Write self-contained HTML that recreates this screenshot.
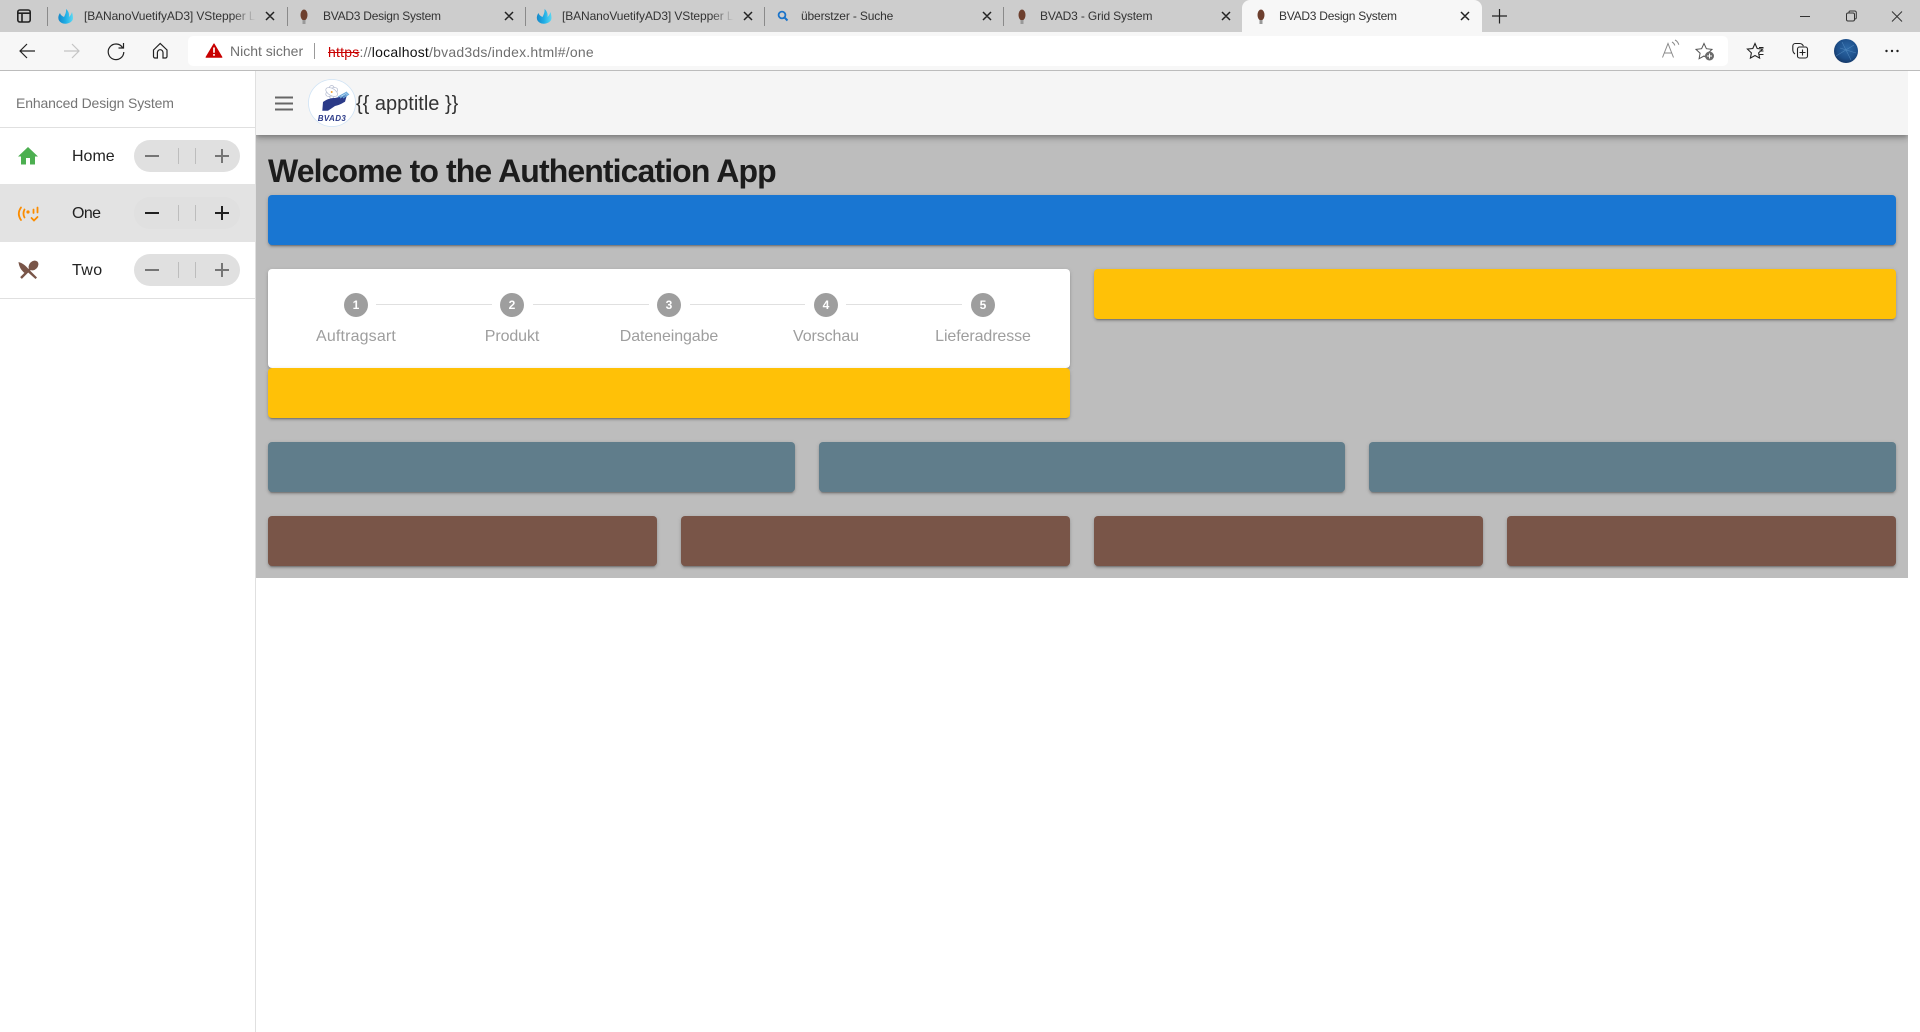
<!DOCTYPE html>
<html><head><meta charset="utf-8"><title>BVAD3 Design System</title>
<style>
html,body{margin:0;padding:0;width:1920px;height:1032px;overflow:hidden;background:#fff;font-family:"Liberation Sans",sans-serif}
div,span{position:absolute;box-sizing:border-box;white-space:nowrap}
svg{position:absolute;overflow:visible}
.tt{top:8px;height:16px;line-height:16px;font-size:12px;color:#333;letter-spacing:-.25px}
.fade{overflow:hidden;letter-spacing:-.1px;-webkit-mask-image:linear-gradient(90deg,#000 85%,transparent 98%);mask-image:linear-gradient(90deg,#000 85%,transparent 98%)}
.sep{top:7px;width:1px;height:19px;background:#8a8a8a}
.card{border-radius:4px;box-shadow:0 3px 1px -2px rgba(0,0,0,.2),0 2px 2px 0 rgba(0,0,0,.14),0 1px 5px 0 rgba(0,0,0,.12)}
.pill{left:134px;width:106px;height:32px;border-radius:16px;background:#e0e0e0}
.lab{left:72px;font-size:16px;line-height:20px;height:20px;color:#222}
.stl{font-size:16px;color:#9e9e9e;top:327px;height:20px;line-height:20px;width:140px;text-align:center;letter-spacing:-.1px}
.c{width:24px;height:24px;border-radius:50%;background:#9e9e9e;top:293px;color:#fff;font-size:12px;font-weight:bold;line-height:24px;text-align:center}
.ln{top:304px;height:1px;background:#e0e0e0}
</style></head><body>

<!-- tab strip -->
<div style="left:0;top:0;width:1920px;height:32px;background:#cdcdcd"></div>
<div style="left:0;top:32px;width:1920px;height:38px;background:#f7f7f7"></div>
<div style="left:0;top:70px;width:1920px;height:1px;background:#bcbcbc"></div>
<div style="left:1242px;top:0;width:240px;height:33px;background:#f7f7f7;border-radius:8px 8px 0 0"></div>
<div style="left:188px;top:36px;width:1540px;height:30px;background:#fff;border-radius:5px"></div>

<svg style="left:0;top:0" width="1920" height="70" fill="none" stroke="#222" stroke-width="1.2">
 <defs>
  <linearGradient id="fl" x1="0" y1="0" x2="1" y2="0"><stop offset="0" stop-color="#1587c8"/><stop offset=".5" stop-color="#20aee6"/><stop offset="1" stop-color="#5cd8f2"/></linearGradient>
  <radialGradient id="av" cx=".55" cy=".4" r=".7"><stop offset="0" stop-color="#2e6aa8"/><stop offset=".6" stop-color="#1d4f8a"/><stop offset="1" stop-color="#122e58"/></radialGradient>
 </defs>
 <!-- tab action -->
 <rect x="17.800" y="10" width="12.400" height="12" rx="2" stroke-width="1.600"/><path d="M18 13.200h12M22 13.200v8.800" stroke-width="1.600"/>
 <!-- close x -->
 <g stroke="#222" stroke-width="1.5"><path d="M266 12l8 8M274 12l-8 8M505 12l8 8M513 12l-8 8M744 12l8 8M752 12l-8 8M983 12l8 8M991 12l-8 8M1222 12l8 8M1230 12l-8 8M1461 12l8 8M1469 12l-8 8"/></g>
 <!-- new tab -->
 <path d="M1499.500 9v14.500M1492 16h15" stroke-width="1.200"/>
 <!-- window controls -->
 <path d="M1800 16.500h10" stroke="#333" stroke-width="1"/>
 <rect x="1846.500" y="13" width="8" height="8" rx="1.500" stroke="#333" stroke-width="1"/><path d="M1849 13v-.8a1.200 1.200 0 0 1 1.200-1.200h4.600a1.500 1.500 0 0 1 1.500 1.500v5.300a1.200 1.200 0 0 1-1.200 1.200h-.6" stroke="#333" stroke-width="1"/>
 <path d="M1892 11.500l10 10M1902 11.500l-10 10" stroke="#333" stroke-width="1"/>
 <!-- flame favicons -->
 <g stroke="none" fill="url(#fl)">
  <path d="M60 13C57 17 58 22 63 23.500 68 24.500 73 22 73 18 73 16 72.500 14 72 12 71 15 70 16 69 17 69.500 14 68.500 11 66 9 66.500 12 65 15 64 17 62 16 60.500 15 60 13z"/>
  <path d="M538.500 13C535.500 17 536.500 22 541.500 23.500 546.500 24.500 551.500 22 551.500 18 551.500 16 551 14 550.500 12 549.500 15 548.500 16 547.500 17 548 14 547 11 544.500 9 545 12 543.500 15 542.500 17 540.500 16 539 15 538.500 13z"/>
 </g>
 <!-- brown favicons -->
 <g stroke="none" fill="#6d3f2e"><ellipse cx="304" cy="15" rx="3.500" ry="5.500"/><ellipse cx="1022" cy="15" rx="3.500" ry="5.500"/><ellipse cx="1261" cy="15" rx="3.500" ry="5.500"/></g>
 <g stroke="none" fill="#999"><rect x="302.500" y="20" width="3" height="4"/><rect x="1020.500" y="20" width="3" height="4"/><rect x="1259.500" y="20" width="3" height="4"/></g>
 <!-- search -->
 <circle cx="782" cy="15" r="3.400" stroke="#1a73c9" stroke-width="1.800"/><path d="M784.500 17.500l3 3" stroke="#1a73c9" stroke-width="2"/>
 <!-- nav -->
 <path d="M20 51h15M27 44l-7 7 7 7" stroke="#222" stroke-width="1.200"/>
 <path d="M64 51h15M72 44l7 7-7 7" stroke="#c4c4c4" stroke-width="1.200"/>
 <path d="M122.500 47.500a7.800 7.800 0 1 0 1.300 4.500M123.500 43v5h-5" stroke="#222" stroke-width="1.200"/>
 <path d="M153.500 50l6.700-6.500 6.800 6.500v6.500a1.500 1.500 0 0 1-1.500 1.500h-2.500v-5.500a2.800 2.800 0 0 0-5.600 0V58H155a1.500 1.500 0 0 1-1.500-1.500z" stroke="#222" stroke-width="1.200"/>
 <!-- warning -->
 <path d="M214 44l7.800 13.200h-15.600z" fill="#c80000" stroke="#c80000" stroke-linejoin="round"/>
 <path d="M214 47.500v5.300M214 54v1.800" stroke="#fff" stroke-width="1.700"/>
 <!-- right toolbar -->
 <path d="M1662.500 57.500l5.500-14 5.500 14M1664.500 53h7" stroke="#8a8a8a" stroke-width="1"/>
 <path d="M1672 42c1.500.8 2.400 2 2.800 3.500M1675 40c2 1 3.200 2.600 3.800 4.800" stroke="#8a8a8a" stroke-width="1"/>
 <path d="M1704 43.500l2.400 5.200 5.600.7-4.100 3.800 1 5.500-4.900-2.700-4.900 2.700 1-5.500-4.100-3.800 5.600-.7z" stroke="#555" stroke-width="1"/>
 <circle cx="1709.500" cy="56" r="4.500" fill="#6b6b6b" stroke="none"/><path d="M1709.500 53.500v5M1707 56h5" stroke="#fff" stroke-width="1"/>
 <path d="M1755 43.500l2.200 5 5.400.6-4 3.800 1 5.200-4.600-2.600-4.600 2.600 1-5.200-4-3.800 5.400-.6z" stroke="#222" stroke-width="1.100"/>
 <path d="M1759 47.500h4.500M1759.500 51h4M1759.500 54.500h4" stroke="#222" stroke-width="1.100"/>
 <path d="M1795 54c-1.500-1-2.200-2.600-2.200-4.200V46a2.500 2.500 0 0 1 2.500-2.500h4.200c1.800 0 3.300 1.100 3.900 2.700" stroke="#222" stroke-width="1.100"/>
 <rect x="1797.500" y="47" width="10" height="11" rx="2" stroke="#222" stroke-width="1.100"/><path d="M1802.500 49.500v6M1799.500 52.500h6" stroke="#222" stroke-width="1.100"/>
 <circle cx="1846" cy="51" r="12" fill="url(#av)" stroke="none"/>
 <path d="M1836 56l18-11M1842 42l9 18M1840 48l16 5" stroke="#5d94c8" stroke-width=".6" opacity=".7"/>
 <g fill="#222" stroke="none"><circle cx="1886.500" cy="51" r="1.200"/><circle cx="1892" cy="51" r="1.200"/><circle cx="1897.500" cy="51" r="1.200"/></g>
</svg>

<div class="sep" style="left:47px"></div><div class="sep" style="left:287px"></div><div class="sep" style="left:525px"></div><div class="sep" style="left:764px"></div><div class="sep" style="left:1003px"></div>
<div class="tt fade" style="left:84px;width:175px">[BANanoVuetifyAD3] VStepper Lo</div>
<div class="tt" style="left:323px">BVAD3 Design System</div>
<div class="tt fade" style="left:562px;width:175px">[BANanoVuetifyAD3] VStepper Lo</div>
<div class="tt" style="left:801px;letter-spacing:-.15px">überstzer - Suche</div>
<div class="tt" style="left:1040px;letter-spacing:-.15px">BVAD3 - Grid System</div>
<div class="tt" style="left:1279px">BVAD3 Design System</div>

<div style="left:230px;top:43px;height:16px;line-height:16px;font-size:14px;color:#6f6f6f">Nicht sicher</div>
<div style="left:314px;top:43px;width:1px;height:16px;background:#9a9a9a"></div>
<div style="left:328px;top:44px;height:16px;line-height:16px;font-size:14px;letter-spacing:.22px;color:#6f6f6f"><span style="position:static;color:#c80000;text-decoration:line-through">https</span>://<span style="position:static;color:#111">localhost</span>/bvad3ds/index.html#/one</div>

<!-- sidebar -->
<div style="left:0;top:71px;width:256px;height:961px;background:#fff;border-right:1px solid #e0e0e0"></div>
<div style="left:16px;top:95px;height:16px;line-height:16px;font-size:14px;color:#757575;letter-spacing:-.15px">Enhanced Design System</div>
<div style="left:0;top:127px;width:255px;height:1px;background:#e0e0e0"></div>
<div style="left:0;top:184px;width:255px;height:58px;background:#e3e3e3"></div>
<div style="left:0;top:298px;width:255px;height:1px;background:#e0e0e0"></div>
<div class="lab" style="top:147px">Home</div>
<div class="lab" style="top:204px;letter-spacing:-.6px">One</div>
<div class="lab" style="top:261px;letter-spacing:.4px">Two</div>
<div class="pill" style="top:140px"></div><div class="pill" style="top:197px"></div><div class="pill" style="top:254px"></div>

<svg style="left:0;top:0" width="256" height="300" fill="none">
 <path d="M28 147l-10 9.500h3v8h5v-6.500h4v6.500h5v-8h3z" fill="#4caf50"/>
 <g stroke="#fb8c00" stroke-width="1.800" stroke-linecap="round">
  <path d="M21 207.500c-2.800 4-2.800 8.500 0 12.500M24.500 209.500c-1.300 2.500-1.300 5.500 0 8M33.500 209.500v3.500M37.500 207.500v5M31.500 218l2.500 2.500 3.500-3.500"/>
 </g>
 <circle cx="28" cy="212" r="1.600" fill="#fb8c00"/>
 <path d="M21 278l10-10" stroke="#795548" stroke-width="2.400"/>
 <ellipse cx="33.500" cy="265.500" rx="4.200" ry="5.500" transform="rotate(45 33.500 265.500)" fill="#795548"/>
 <path d="M18.500 262c4 1 7 3.500 9.500 6.500l9 9-1.500 1.500-9-8-2 2c-3-2.500-5.500-6-6-11z" fill="#795548"/>
 <g stroke-width="2">
  <path d="M145 156h14M215 156h14M222 149v14" stroke="#757575"/>
  <path d="M145 213h14M215 213h14M222 206v14" stroke="#212121"/>
  <path d="M145 270h14M215 270h14M222 263v14" stroke="#757575"/>
 </g>
 <g stroke="#bdbdbd" stroke-width="1">
  <path d="M178.500 148v16M195.500 148v16M178.500 205v16M195.500 205v16M178.500 262v16M195.500 262v16"/>
 </g>
</svg>

<!-- main (clipped so the toolbar shadow stops at the right edge) -->
<div style="left:256px;top:71px;width:1652px;height:507px;overflow:hidden">
 <div style="left:0;top:64px;width:1652px;height:443px;background:#bdbdbd"></div>
 <div style="left:0;top:0;width:1652px;height:64px;background:#f5f5f5;box-shadow:0 2px 4px -1px rgba(0,0,0,.2),0 4px 5px 0 rgba(0,0,0,.14),0 1px 10px 0 rgba(0,0,0,.12)"></div>
</div>

<svg style="left:256px;top:71px" width="240" height="64" fill="none">
 <path d="M19 26.500h18M19 32.500h18M19 38.500h18" stroke="#666" stroke-width="2"/>
 <circle cx="76" cy="32" r="23.500" fill="#fff" stroke="#cfe3f5" stroke-width=".8"/>
 <g stroke="#b5bcd0" stroke-width=".7" fill="#fff"><ellipse cx="75.700" cy="21" rx="3.500" ry="6.500"/><ellipse cx="75.700" cy="21" rx="3.500" ry="6.500" transform="rotate(60 75.700 21)"/><ellipse cx="75.700" cy="21" rx="3.500" ry="6.500" transform="rotate(-60 75.700 21)"/></g>
 <circle cx="75.700" cy="21" r="1" fill="#f0a030"/>
 <path d="M66.300 39.700L67 31C71 28 75 27 79 27L91 24 89 30.700C85 33 83 34 79 35L72 39.700z" fill="#2b3a88"/>
 <path d="M82 26l9-5M84 27l8-5M87 27l6-4" stroke="#6aa9dc" stroke-width="1.200"/>
 <text x="76" y="50" text-anchor="middle" font-family="Liberation Sans" font-size="8" font-weight="bold" font-style="italic" fill="#2b3a88" letter-spacing=".4">BVAD3</text>
</svg>
<div style="left:356px;top:92px;height:24px;line-height:24px;font-size:20px;color:#333">{{ apptitle }}</div>

<div style="left:268px;top:151px;height:40px;line-height:40px;font-size:32px;font-weight:bold;color:#1c1c1c;letter-spacing:-.9px">Welcome to the Authentication App</div>

<div class="card" style="left:268px;top:195px;width:1628px;height:50px;background:#1976d2"></div>
<div class="card" style="left:268px;top:269px;width:802px;height:99px;background:#fff"></div>
<div class="card" style="left:268px;top:368px;width:802px;height:50px;background:#ffc107"></div>
<div class="card" style="left:1094px;top:269px;width:802px;height:50px;background:#ffc107"></div>
<div class="card" style="left:268px;top:442px;width:527px;height:50px;background:#607d8b"></div>
<div class="card" style="left:819px;top:442px;width:526px;height:50px;background:#607d8b"></div>
<div class="card" style="left:1369px;top:442px;width:527px;height:50px;background:#607d8b"></div>
<div class="card" style="left:268px;top:516px;width:389px;height:50px;background:#795548"></div>
<div class="card" style="left:681px;top:516px;width:389px;height:50px;background:#795548"></div>
<div class="card" style="left:1094px;top:516px;width:389px;height:50px;background:#795548"></div>
<div class="card" style="left:1507px;top:516px;width:389px;height:50px;background:#795548"></div>

<div class="ln" style="left:376px;width:116px"></div><div class="ln" style="left:533px;width:116px"></div><div class="ln" style="left:690px;width:115px"></div><div class="ln" style="left:846px;width:116px"></div>
<div class="c" style="left:344px">1</div><div class="c" style="left:500px">2</div><div class="c" style="left:657px">3</div><div class="c" style="left:814px">4</div><div class="c" style="left:971px">5</div>
<div class="stl" style="left:286px;letter-spacing:.15px">Auftragsart</div><div class="stl" style="left:442px">Produkt</div><div class="stl" style="left:599px">Dateneingabe</div><div class="stl" style="left:756px">Vorschau</div><div class="stl" style="left:913px">Lieferadresse</div>

</body></html>
